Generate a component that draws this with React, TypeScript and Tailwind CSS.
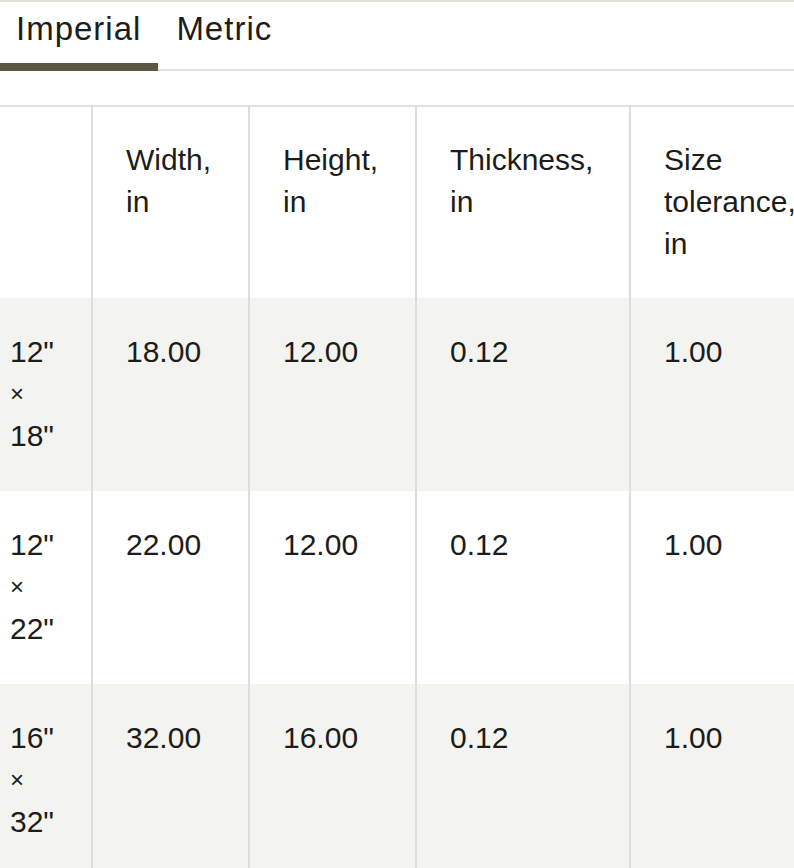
const rows = [
  { size: ['12"', '×', '18"'], width: '18.00', height: '12.00', thick: '0.12', tol: '1.00' },
  { size: ['12"', '×', '22"'], width: '22.00', height: '12.00', thick: '0.12', tol: '1.00' },
  { size: ['16"', '×', '32"'], width: '32.00', height: '16.00', thick: '0.12', tol: '1.00' },
]

const cell = "border-l-2 border-[#deddd7] pl-[33px] pr-[28px] pt-[33px] pb-[34px] align-top"
const head = "border-l-2 border-[#deddd7] pl-[33px] pr-[28px] pt-[32px] pb-[33px] align-top font-normal"

export default function App() {
  return (
    <main className="w-[794px] h-[868px] overflow-hidden bg-white text-[#1c1c1a] font-['Liberation_Sans',Arial,sans-serif] border-t-2 border-[#e2e1dc]">
      <nav className="flex border-b-2 border-[#e2e1dc]">
        <button className="-mb-[2px] pl-[16px] pr-[17px] pt-[8px] pb-[15px] text-[33px] leading-[38px] tracking-[1px] border-b-[8px] border-[#5a5a43]">
          Imperial
        </button>
        <button className="-mb-[2px] pl-[18px] pr-[18px] pt-[8px] pb-[15px] text-[33px] leading-[38px] tracking-[1px] border-b-[8px] border-transparent">
          Metric
        </button>
      </nav>
      <table className="mt-[34px] table-fixed border-collapse w-[850px] text-[30px] leading-[42px] text-left">
        <colgroup>
          <col className="w-[92px]" />
          <col className="w-[157px]" />
          <col className="w-[167px]" />
          <col className="w-[214px]" />
          <col className="w-[220px]" />
        </colgroup>
        <thead>
          <tr className="border-t-2 border-[#e2e1dc] bg-white">
            <th className="pl-[10px] pr-[28px] pt-[32px] pb-[33px] font-normal align-top"></th>
            <th className={head}>Width, in</th>
            <th className={head}>Height, in</th>
            <th className={head}>Thickness, in</th>
            <th className={head}>Size tolerance, in</th>
          </tr>
        </thead>
        <tbody>
          {rows.map((r, i) => (
            <tr key={i} className={i % 2 === 0 ? "bg-[#f3f3ef]" : "bg-white"}>
              <td className="pl-[10px] pr-[28px] pt-[33px] pb-[34px] align-top">
                {r.size.map((s, j) => (
                  <div key={j} className={j === 1 ? "text-[24px]" : ""}>{s}</div>
                ))}
              </td>
              <td className={cell}>{r.width}</td>
              <td className={cell}>{r.height}</td>
              <td className={cell}>{r.thick}</td>
              <td className={cell}>{r.tol}</td>
            </tr>
          ))}
        </tbody>
      </table>
    </main>
  )
}
